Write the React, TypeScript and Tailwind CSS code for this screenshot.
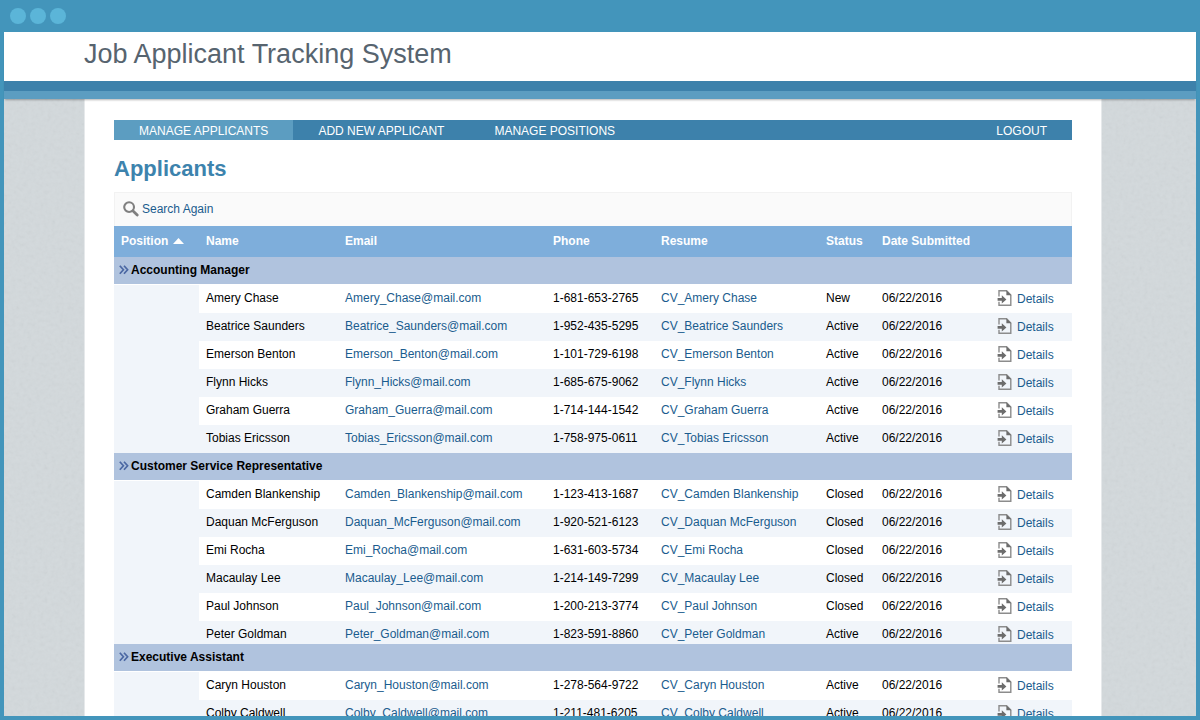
type Applicant = {
  name: string;
  phone: string;
  status: string;
};

type Group = {
  position: string;
  applicants: Applicant[];
  condensed?: boolean;
};

const groups: Group[] = [
  {
    position: 'Accounting Manager',
    applicants: [
      { name: 'Amery Chase', phone: '1-681-653-2765', status: 'New' },
      { name: 'Beatrice Saunders', phone: '1-952-435-5295', status: 'Active' },
      { name: 'Emerson Benton', phone: '1-101-729-6198', status: 'Active' },
      { name: 'Flynn Hicks', phone: '1-685-675-9062', status: 'Active' },
      { name: 'Graham Guerra', phone: '1-714-144-1542', status: 'Active' },
      { name: 'Tobias Ericsson', phone: '1-758-975-0611', status: 'Active' },
    ],
  },
  {
    position: 'Customer Service Representative',
    condensed: true,
    applicants: [
      { name: 'Camden Blankenship', phone: '1-123-413-1687', status: 'Closed' },
      { name: 'Daquan McFerguson', phone: '1-920-521-6123', status: 'Closed' },
      { name: 'Emi Rocha', phone: '1-631-603-5734', status: 'Closed' },
      { name: 'Macaulay Lee', phone: '1-214-149-7299', status: 'Closed' },
      { name: 'Paul Johnson', phone: '1-200-213-3774', status: 'Closed' },
      { name: 'Peter Goldman', phone: '1-823-591-8860', status: 'Active' },
    ],
  },
  {
    position: 'Executive Assistant',
    applicants: [
      { name: 'Caryn Houston', phone: '1-278-564-9722', status: 'Active' },
      { name: 'Colby Caldwell', phone: '1-211-481-6205', status: 'Active' },
    ],
  },
];

function SearchIcon() {
  return (
    <svg width="16" height="16" viewBox="0 0 16 16" fill="none" stroke="#808080" aria-hidden="true">
      <circle cx="6.1" cy="6.1" r="4.9" strokeWidth="2.1" />
      <path d="M9.8 9.8 14.2 14" strokeWidth="2.8" strokeLinecap="round" />
    </svg>
  );
}

function DetailsIcon() {
  return (
    <svg width="15" height="16" viewBox="0 0 15 16" fill="none" aria-hidden="true">
      <path d="M2 6.4V.8h7.6l4.2 4.2v10.2H2v-3.4" stroke="#8c8c8c" strokeWidth="1.4" />
      <path d="M9.4.5v4.7h4.9z" fill="#6c6c6c" />
      <path d="M.6 8h4.2V5.3L9.4 9.4l-4.6 4v-2.6H.6z" fill="#6c6c6c" />
    </svg>
  );
}

function GroupIcon() {
  return (
    <svg width="10" height="10" viewBox="0 0 10 10" fill="none" stroke="#4a67a3" strokeWidth="1.7" aria-hidden="true">
      <path d="M.8.8 4.4 4.8.8 8.8M5 .8 8.6 4.8 5 8.8" />
    </svg>
  );
}

function GroupRows({ group }: { group: Group }) {
  const { position, applicants, condensed } = group;

  return (
    <tbody>
      <tr className="h-7">
        <th colSpan={8} scope="rowgroup" className="border-b border-white bg-[#b0c3de] pt-[5px] pl-[5px] text-left align-top font-bold">
          <div className="flex items-center gap-0.5">
            <GroupIcon />
            {position}
          </div>
        </th>
      </tr>
      {applicants.map((a, i) => (
        <tr
          key={a.name}
          className={`${i % 2 ? 'bg-[#f1f5fa]' : 'bg-white'} ${condensed && i === applicants.length - 1 ? 'h-[23px]' : 'h-7'}`}
        >
          {i === 0 && <td rowSpan={applicants.length} className="bg-[#f1f5fa]" />}
          <td className="pt-[5px] pl-[7px] align-top">{a.name}</td>
          <td className="pt-[5px] pl-[7px] align-top">
            <a href="#" className="text-[#1a5c8e] hover:underline">{a.name.split(' ').join('_')}@mail.com</a>
          </td>
          <td className="pt-[5px] pl-[7px] align-top">{a.phone}</td>
          <td className="pt-[5px] pl-[7px] align-top">
            <a href="#" className="text-[#1a5c8e] hover:underline">CV_{a.name}</a>
          </td>
          <td className="pt-[5px] pl-[7px] align-top">{a.status}</td>
          <td className="pt-[5px] pl-[7px] align-top">06/22/2016</td>
          <td className="pt-[5px] pl-[7px] align-top">
            <a href="#" className="flex items-start gap-[5px] leading-[18px] text-[#1a5c8e] hover:underline">
              <DetailsIcon />
              Details
            </a>
          </td>
        </tr>
      ))}
    </tbody>
  );
}

export default function App() {
  return (
    <div className="flex h-screen flex-col overflow-hidden bg-[#4395bb] px-1 pb-1 font-['Liberation_Sans',Arial,sans-serif] text-xs leading-4 text-black">
      {/* Window bar */}
      <div className="flex h-8 shrink-0 items-center gap-1 pl-1.5">
        <span className="size-4 rounded-full bg-[#5bb5d8]" />
        <span className="size-4 rounded-full bg-[#5bb5d8]" />
        <span className="size-4 rounded-full bg-[#5bb5d8]" />
      </div>

      {/* Header */}
      <header className="relative z-10 shrink-0 bg-white shadow-[0_2px_2px_-1px_rgba(0,0,0,0.3)]">
        <h1 className="px-20 pt-1.5 pb-[11px] text-[27px] leading-8 text-[#57646f]">Job Applicant Tracking System</h1>
        <div className="h-2.5 bg-[#3d81ab]" />
        <div className="h-2 bg-[#5c9dc1]" />
      </header>

      <div className="relative min-h-0 flex-1 overflow-hidden bg-[#d3d9dc] pr-[94px] pl-20">
        {/* Paper texture */}
        <svg className="absolute inset-0 h-full w-full opacity-10" aria-hidden="true">
          <filter id="paper">
            <feTurbulence type="fractalNoise" baseFrequency="0.25" numOctaves="3" seed="4" />
            <feColorMatrix type="saturate" values="0" />
          </filter>
          <rect width="100%" height="100%" filter="url(#paper)" />
        </svg>

        <main className="relative min-h-full border-x border-[#e6e9eb] bg-white px-[29px] pt-[21px]">
          <nav className="flex h-5 bg-[#3d81ab] leading-[22px] text-white">
            <a href="#" className="bg-[#5c9dc1] px-[25px]">MANAGE APPLICANTS</a>
            <a href="#" className="px-[25px]">ADD NEW APPLICANT</a>
            <a href="#" className="px-[25px]">MANAGE POSITIONS</a>
            <a href="#" className="ml-auto px-[25px]">LOGOUT</a>
          </nav>

          <h2 className="pt-[17px] pb-[11px] text-[22px] leading-6 font-bold text-[#3d83ad]">Applicants</h2>

          <div className="h-[34px] border border-b-0 border-[#f2f2f2] bg-[#fafafa] px-2 pt-2">
            <a href="#" className="flex items-center gap-[3px] text-[#1a5c8e] hover:underline">
              <SearchIcon />
              Search Again
            </a>
          </div>

          {/* Applicants table */}
          <table className="w-full table-fixed border-separate border-spacing-0">
            <colgroup>
              <col className="w-[85px]" />
              <col className="w-[139px]" />
              <col className="w-[208px]" />
              <col className="w-[108px]" />
              <col className="w-[165px]" />
              <col className="w-[56px]" />
              <col className="w-[115px]" />
              <col className="w-[82px]" />
            </colgroup>
            <thead>
              <tr className="h-[31px] bg-[#7eaedb] text-left text-white">
                <th className="pt-[7px] pl-[7px] align-top">
                  <button type="button" className="flex items-center gap-[5px] font-bold">
                    Position
                    <svg width="11" height="6" viewBox="0 0 11 6" fill="currentColor" aria-hidden="true">
                      <path d="M5.5 0 11 6H0z" />
                    </svg>
                  </button>
                </th>
                <th className="pt-[7px] pl-[7px] align-top">Name</th>
                <th className="pt-[7px] pl-[7px] align-top">Email</th>
                <th className="pt-[7px] pl-[7px] align-top">Phone</th>
                <th className="pt-[7px] pl-[7px] align-top">Resume</th>
                <th className="pt-[7px] pl-[7px] align-top">Status</th>
                <th className="pt-[7px] pl-[7px] align-top whitespace-nowrap">Date Submitted</th>
                <td />
              </tr>
            </thead>
            {groups.map((group) => (
              <GroupRows key={group.position} group={group} />
            ))}
          </table>
        </main>
      </div>
    </div>
  );
}
